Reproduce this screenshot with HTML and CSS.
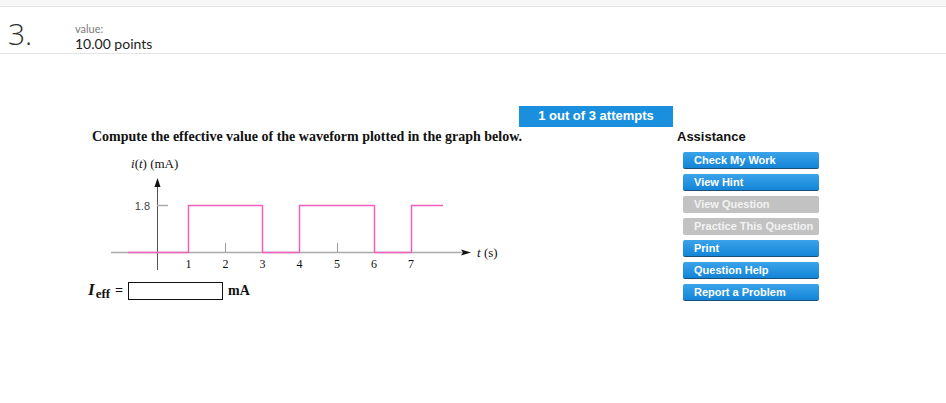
FILE: index.html
```html
<!DOCTYPE html>
<html>
<head>
<meta charset="utf-8">
<link rel="stylesheet" href="styles.css">
</head>
<body>
<div class="topband"></div>
<header class="qhead">
  <div class="qnum">3.</div>
  <div class="qvalue">
    <div class="vlabel">value:</div>
    <div class="vpoints">10.00 points</div>
  </div>
</header>
<main class="content">
  <section class="question">
    <div class="attempts-row"><div class="attempts">1 out of 3 attempts</div></div>
    <p class="prompt">Compute the effective value of the waveform plotted in the graph below.</p>
    <svg class="graph" width="410" height="125" viewBox="100 150 410 125">
      <text x="131" y="167" class="lbl"><tspan font-style="italic">i</tspan>(<tspan font-style="italic">t</tspan>) (mA)</text>
      <line x1="157.5" y1="184" x2="157.5" y2="269" stroke="#555" stroke-width="1"/>
      <polygon points="157.5,177 154.5,186 160.5,186" fill="#111"/>
      <line x1="157" y1="204.5" x2="168" y2="204.5" stroke="#aaa" stroke-width="1.5"/>
      <text x="150" y="208.5" class="num18" text-anchor="end">1.8</text>
      <line x1="111" y1="251.5" x2="463" y2="251.5" stroke="#aaa" stroke-width="1.5"/>
      <polygon points="471,251.5 461,248.5 463,251.5 461,254.5" fill="#111"/>
      <line x1="225.5" y1="242" x2="225.5" y2="251" stroke="#999" stroke-width="1"/>
      <line x1="337.5" y1="242" x2="337.5" y2="251" stroke="#999" stroke-width="1"/>
      <path d="M128 251.5 H188.5 V204.5 H262.5 V251.5 H299.5 V204.5 H374.5 V251.5 H411.5 V204.5 H443" fill="none" stroke="#f060bd" stroke-width="1.5"/>
      <g class="ticks" text-anchor="middle">
        <text x="188.5" y="267">1</text>
        <text x="225.5" y="267">2</text>
        <text x="262.5" y="267">3</text>
        <text x="299.5" y="267">4</text>
        <text x="337" y="267">5</text>
        <text x="374" y="267">6</text>
        <text x="411" y="267">7</text>
      </g>
      <text x="477" y="256" class="lbl"><tspan font-style="italic">t</tspan> (s)</text>
    </svg>
    <div class="answer">
      <span class="ieff"><i>I</i><sub>eff</sub></span>
      <span class="eq">=</span>
      <input class="box" type="text">
      <span class="unit">mA</span>
    </div>
  </section>
  <aside class="assist">
    <h3 class="assist-title">Assistance</h3>
    <div class="btn">Check My Work</div>
    <div class="btn">View Hint</div>
    <div class="btn off">View Question</div>
    <div class="btn off">Practice This Question</div>
    <div class="btn">Print</div>
    <div class="btn">Question Help</div>
    <div class="btn">Report a Problem</div>
  </aside>
</main>
</body>
</html>
```

FILE: styles.css
```css
html, body {
  margin: 0;
  padding: 0;
  background: #fff;
}
body {
  font-family: "Liberation Sans", Arial, sans-serif;
  color: #222;
}
.topband {
  height: 6px;
  background: #f7f7f7;
  border-bottom: 1px solid #e4e4e4;
}
.qhead {
  display: flex;
  align-items: flex-start;
  height: 46px;
  border-bottom: 1px solid #e4e4e4;
}
.qnum {
  font-family: "Open Sans", sans-serif;
  font-weight: 300;
  font-size: 30px;
  line-height: 30px;
  color: #333;
  margin: 12px 0 0 8px;
  width: 67px;
}
.qvalue {
  margin-top: 15px;
  font-family: Lato, sans-serif;
}
.vlabel {
  font-size: 11px;
  line-height: 14px;
  color: #7a7a7a;
}
.vpoints {
  font-size: 14px;
  line-height: 16px;
  color: #222;
}
.content {
  display: flex;
  align-items: flex-start;
  padding-left: 92px;
}
.question {
  width: 581px;
}
.attempts-row {
  display: flex;
  justify-content: flex-end;
  margin-top: 52px;
}
.attempts {
  width: 154px;
  height: 21px;
  line-height: 20px;
  background: #1a8fdd;
  color: #fff;
  font-weight: bold;
  font-size: 13px;
  text-align: center;
}
.prompt {
  margin: 1px 0 0 0;
  font-family: "Liberation Serif", "Times New Roman", serif;
  font-weight: bold;
  font-size: 14px;
  line-height: 18px;
  color: #111;
}
.graph {
  display: block;
  margin: 5px 0 0 8px;
}
.lbl {
  font-family: "Liberation Serif", serif;
  font-size: 13px;
  fill: #111;
}
.num18 {
  font-family: "Liberation Sans", sans-serif;
  font-size: 11px;
  fill: #444;
}
.ticks text {
  font-family: "Liberation Serif", serif;
  font-size: 12px;
  fill: #111;
}
.answer {
  display: flex;
  align-items: center;
  margin: 4px 0 0 -4px;
  font-family: "Liberation Serif", serif;
  font-weight: bold;
  font-size: 14px;
  color: #111;
}
.ieff i {
  font-size: 17px;
}
.ieff sub {
  font-size: 13px;
  vertical-align: -3px;
  margin-left: 1px;
}
.eq {
  margin: 0 5px 0 5px;
  font-weight: bold;
}
.box {
  width: 93px;
  height: 16px;
  padding: 0;
  margin: 0;
  border: 1px solid #111;
  border-radius: 0;
}
.unit {
  margin-left: 5px;
}
.assist {
  margin-left: 4px;
  margin-top: 75px;
  width: 150px;
}
.assist-title {
  margin: 0 0 7px 0;
  font-size: 13px;
  line-height: 16px;
  font-weight: bold;
  color: #111;
}
.btn {
  margin-left: 6px;
  width: 125px;
  height: 16px;
  padding-left: 11px;
  margin-bottom: 5px;
  line-height: 16px;
  font-size: 11px;
  font-weight: bold;
  color: #fff;
  border-radius: 2px;
  background: linear-gradient(#3aa3ea, #1485d8);
  border-bottom: 1px solid #1c4f78;
}
.btn.off {
  background: #c2c2c2;
  border-bottom: 1px solid #c2c2c2;
  color: #f2f2f2;
}
```
